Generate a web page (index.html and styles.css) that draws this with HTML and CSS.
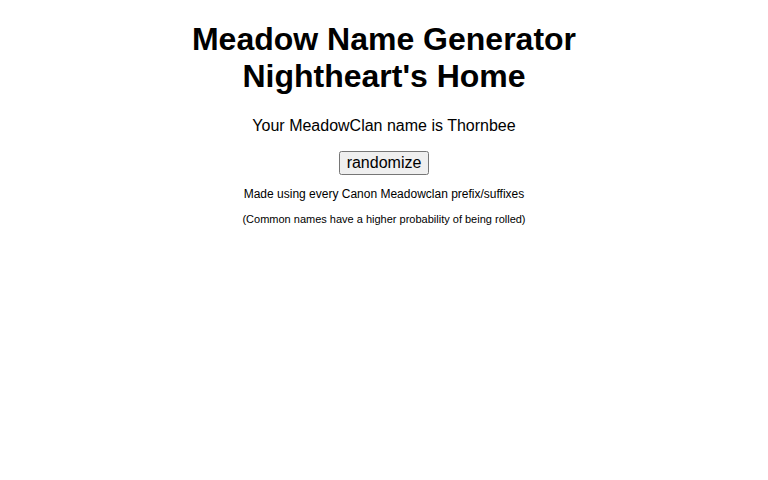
FILE: index.html
```html
<!DOCTYPE html>
<html>
<head>
<meta charset="utf-8">
<title>Meadow Name Generator</title>
<link rel="stylesheet" href="styles.css">
</head>
<body>
<main class="page">
  <h1 class="title">Meadow Name Generator<br>Nightheart's Home</h1>
  <p class="result">Your MeadowClan name is Thornbee</p>
  <div class="actions"><button class="randomize" type="button">randomize</button></div>
  <p class="note">Made using every Canon Meadowclan prefix/suffixes</p>
  <p class="fineprint">(Common names have a higher probability of being rolled)</p>
</main>
</body>
</html>
```
FILE: styles.css
```css
body {
  margin: 0 8px 8px;
  font-family: "Liberation Sans", Arial, sans-serif;
  color: #000;
  background: #fff;
}
.page {
  text-align: center;
  padding-top: 0.1px;
}
.title {
  font-size: 32px;
  font-weight: bold;
  margin: 21.34px 0 21.44px;
}
.result {
  font-size: 16px;
  margin: 16px 0;
}
.actions {
  font-size: 16px;
}
.randomize {
  font-family: "Liberation Sans", Arial, sans-serif;
  font-size: 16px;
  color: #000;
  padding: 1px 6px;
}
.note {
  font-size: 12px;
  margin: 12px 0;
}
.fineprint {
  font-size: 11px;
  margin: 11px 0;
}
```
